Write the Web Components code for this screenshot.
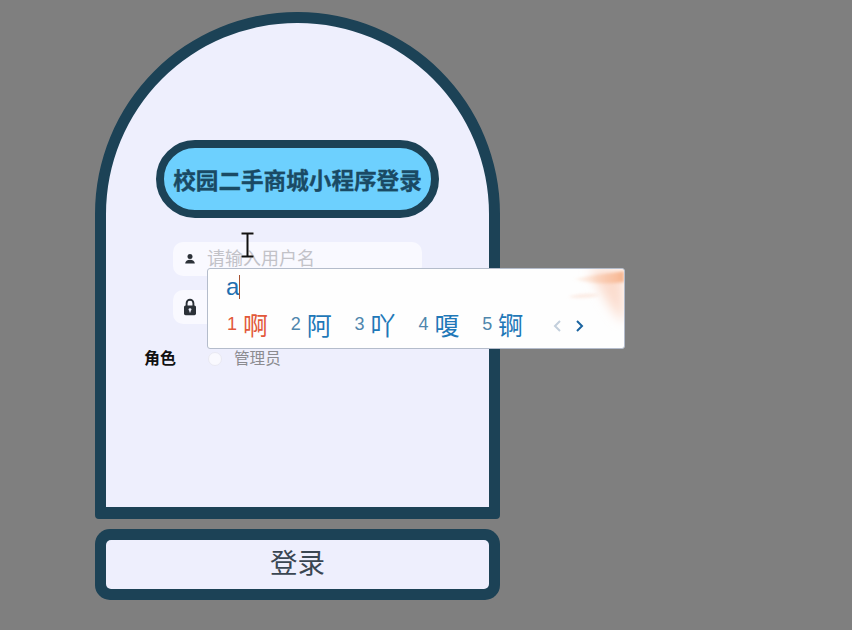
<!DOCTYPE html>
<html>
<head>
<meta charset="utf-8">
<style>
  html, body { margin: 0; height: 100%; background: #7f7f7f; overflow: hidden; }
  body { font-family: "Liberation Sans", "Noto Sans CJK SC", sans-serif; }
</style>
</head>
<body>
<login-page>
  <login-card>
    <title-pill>校园二手商城小程序登录</title-pill>
    <field-row icon="user">请输入用户名</field-row>
    <field-row icon="lock"></field-row>
    <role-row label="角色">管理员</role-row>
  </login-card>
  <login-button>登录</login-button>
  <ime-popup slot="overlay" input="a"></ime-popup>
  <text-cursor slot="overlay"></text-cursor>
</login-page>
<script>
const cjk = '"Liberation Sans", "Noto Sans CJK SC", sans-serif';

class LoginPage extends HTMLElement {
  constructor() {
    super();
    this.attachShadow({ mode: 'open' }).innerHTML = `
      <style>
        :host { display: flex; flex-direction: column; gap: 10px; width: 405px; padding: 12px 0 0 95px; font-family: ${cjk}; }
      </style>
      <slot></slot>
      <slot name="overlay"></slot>`;
  }
}

class LoginCard extends HTMLElement {
  constructor() {
    super();
    this.attachShadow({ mode: 'open' }).innerHTML = `
      <style>
        :host {
          display: flex; flex-direction: column; align-items: center;
          box-sizing: border-box; width: 405px; height: 507px; padding-top: 117px;
          background: #eeeffd; border: 11px solid #1c4256; border-bottom-width: 12px;
          border-radius: 202px 202px 4px 4px;
        }
      </style>
      <slot></slot>`;
  }
}

class TitlePill extends HTMLElement {
  constructor() {
    super();
    this.attachShadow({ mode: 'open' }).innerHTML = `
      <style>
        :host {
          display: flex; align-items: center; justify-content: center;
          box-sizing: border-box; width: 283px; height: 78px; margin-bottom: 24px;
          background: #6dd0fe; border: 8px solid #1c4256; border-radius: 39px;
          color: #1a4a64; font-size: 22.6px; font-weight: 700; white-space: nowrap;
          -webkit-text-stroke: 0.3px #1a4a64;
        }
      </style>
      <slot></slot>`;
  }
}

const fieldIcons = {
  user: '<svg width="12" height="12" viewBox="0 0 12 12"><circle cx="6" cy="3.4" r="2.5" fill="#2b3138"/><path d="M1.2 10.6c0-2.6 2-3.9 4.8-3.9s4.8 1.3 4.8 3.9z" fill="#2b3138"/></svg>',
  lock: '<svg width="14" height="18" viewBox="0 0 14 18"><path d="M3.6 8V5.2a3.4 3.4 0 0 1 6.8 0V8" fill="none" stroke="#2b3138" stroke-width="1.9"/><rect x="1" y="7.4" width="12" height="9.8" rx="1.6" fill="#2b3138"/><circle cx="7" cy="11.6" r="1.4" fill="#eeeffd"/><rect x="6.4" y="11.6" width="1.2" height="2.8" fill="#eeeffd"/></svg>'
};

class FieldRow extends HTMLElement {
  constructor() {
    super();
    this.attachShadow({ mode: 'open' }).innerHTML = `
      <style>
        :host {
          display: flex; align-items: center;
          box-sizing: border-box; width: 249px; height: 34px; margin-bottom: 14px;
          background: #f9f9ff; border-radius: 10px;
          color: #c2c2c8; font-size: 18px; white-space: nowrap;
        }
        .icon { display: flex; align-items: center; justify-content: center; width: 34px; flex: none; }
        .text { padding-bottom: 4px; }
      </style>
      <span class="icon"></span>
      <span class="text"><slot></slot></span>`;
  }
  connectedCallback() {
    this.shadowRoot.querySelector('.icon').innerHTML = fieldIcons[this.getAttribute('icon')];
  }
}

class RoleRow extends HTMLElement {
  constructor() {
    super();
    this.attachShadow({ mode: 'open' }).innerHTML = `
      <style>
        :host {
          display: flex; align-items: center; align-self: flex-start;
          height: 24px; margin: 7px 0 0 38px;
          color: #8b8b90; font-size: 15.6px; white-space: nowrap;
        }
        .label { width: 32px; margin-right: 32px; color: #111; font-size: 16px; font-weight: 700; }
        .radio { width: 14px; height: 14px; margin: 3px 12px 0 0; background: #f9f9fe; border: 1px solid #e9e9f2; border-radius: 50%; box-sizing: border-box; }
      </style>
      <span class="label"></span>
      <span class="radio"></span>
      <slot></slot>`;
  }
  connectedCallback() {
    this.shadowRoot.querySelector('.label').textContent = this.getAttribute('label');
  }
}

class LoginButton extends HTMLElement {
  constructor() {
    super();
    this.attachShadow({ mode: 'open' }).innerHTML = `
      <style>
        :host { display: block; box-sizing: border-box; width: 405px; height: 71px; background: #1c4256; padding: 11px; border-radius: 15px; }
        .face {
          display: flex; align-items: center; justify-content: center;
          box-sizing: border-box; height: 100%; padding-bottom: 8px;
          background: #eeeffd; border-radius: 5px;
          color: #3a4652; font-size: 27.5px;
        }
      </style>
      <div class="face"><slot></slot></div>`;
  }
}

class ImePopup extends HTMLElement {
  constructor() {
    super();
    this.attachShadow({ mode: 'open' }).innerHTML = `
      <style>
        :host {
          position: absolute; left: 207px; top: 268px;
          box-sizing: border-box; width: 418px; height: 81px;
          padding: 5px 0 0 18px; overflow: hidden;
          background: #fefefe; border: 1px solid #b4bccb; border-radius: 3px;
        }
        .swoosh { position: absolute; right: 0; top: 0; }
        .input { position: relative; display: flex; align-items: center; height: 26px; color: #1f6fb0; font-size: 24px; }
        .caret { width: 1px; height: 24px; margin-left: 0; background: #a5512f; }
        .list { position: relative; display: flex; align-items: center; margin: 8px 0 0 1px; height: 32px; }
        .cand { display: flex; align-items: center; width: 63.8px; color: #1f78b8; font-size: 25px; }
        .cand b { width: 16px; color: #4f86ad; font-size: 18px; font-weight: 400; }
        .cand.on, .cand.on b { color: #e2583a; }
        .pager { display: flex; gap: 11px; margin: 3px 0 0 6px; }
      </style>
      <svg class="swoosh" width="70" height="62" viewBox="0 0 70 62">
        <defs>
          <filter id="soft" x="-30%" y="-60%" width="160%" height="220%"><feGaussianBlur stdDeviation="1.5"/></filter>
          <filter id="softer" x="-50%" y="-50%" width="200%" height="200%"><feGaussianBlur stdDeviation="6"/></filter>
          <linearGradient id="band" x1="0" x2="1" y1="0" y2="0">
            <stop offset="0" stop-color="#fbd6bf" stop-opacity="0.2"/>
            <stop offset="1" stop-color="#f7b48e"/>
          </linearGradient>
        </defs>
        <path d="M36 0H70V54C60 44 46 24 36 0z" fill="#fbdccd" filter="url(#softer)"/>
        <path d="M20 10C36 6 54 5 70 2V13C54 15 36 15 20 10z" fill="url(#band)" filter="url(#soft)"/>
        <path d="M14 28C26 24 38 24 46 26C38 29 26 30 14 28z" fill="#fbe3d8" opacity="0.7" filter="url(#soft)"/>
      </svg>
      <div class="input">a<span class="caret"></span></div>
      <div class="list"></div>`;
  }
  connectedCallback() {
    const list = this.shadowRoot.querySelector('.list');
    ['啊', '阿', '吖', '嗄', '锕'].forEach((word, i) => {
      const cand = document.createElement('span');
      cand.className = i === 0 ? 'cand on' : 'cand';
      cand.innerHTML = `<b>${i + 1}</b>${word}`;
      list.appendChild(cand);
    });
    const pager = document.createElement('span');
    pager.className = 'pager';
    pager.innerHTML = `
      <svg width="11" height="14" viewBox="0 0 11 14"><path d="M8 2L3 7l5 5" fill="none" stroke="#c3cfdc" stroke-width="2"/></svg>
      <svg width="11" height="14" viewBox="0 0 11 14"><path d="M3 2l5 5-5 5" fill="none" stroke="#1b64a0" stroke-width="2"/></svg>`;
    list.appendChild(pager);
  }
}

class TextCursor extends HTMLElement {
  constructor() {
    super();
    this.attachShadow({ mode: 'open' }).innerHTML = `
      <style>
        :host { position: absolute; left: 240px; top: 232px; display: block; width: 15px; height: 26px; }
        svg { display: block; }
      </style>
      <svg width="15" height="26" viewBox="0 0 15 26">
        <path d="M1 1.5h13M1 24.5h13M7.5 1.5v23" fill="none" stroke="#fff" stroke-width="3.5" opacity="0.5"/>
        <path d="M1.5 1.5h12M1.5 24.5h12M7.5 1.5v23" fill="none" stroke="#111" stroke-width="2"/>
      </svg>`;
  }
}

customElements.define('login-page', LoginPage);
customElements.define('login-card', LoginCard);
customElements.define('title-pill', TitlePill);
customElements.define('field-row', FieldRow);
customElements.define('role-row', RoleRow);
customElements.define('login-button', LoginButton);
customElements.define('ime-popup', ImePopup);
customElements.define('text-cursor', TextCursor);
</script>
</body>
</html>
